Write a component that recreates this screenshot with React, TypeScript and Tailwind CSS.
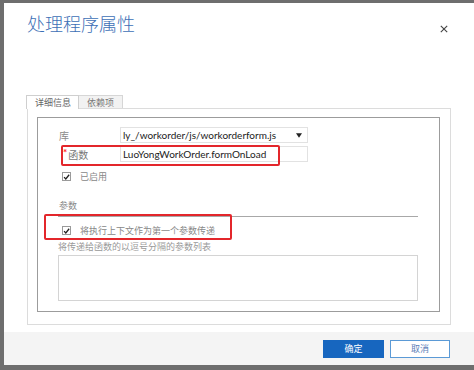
import React from 'react';

const cjk = '"Noto Sans CJK SC", "Open Sans", sans-serif';
const latin = 'Lato, "Noto Sans CJK SC", sans-serif';

const Check: React.FC = () => (
  <span className="w-[9px] h-[9px] border border-[#9a9a9a] bg-white flex items-center justify-center">
    <svg viewBox="0 0 10 10" className="w-[8px] h-[8px]">
      <path d="M1.5 5.2 L4 7.8 L8.8 1.8" fill="none" stroke="#222" strokeWidth="1.8" />
    </svg>
  </span>
);

export default function App() {
  return (
    <div
      className="w-[474px] h-[370px] bg-[#6e6e6e] pl-[4px] pt-[3px] pb-[5px] flex"
      style={{ fontFamily: cjk }}
    >
      <div className="flex-1 flex flex-col bg-white">
        {/* header */}
        <div className="h-[92px] flex justify-between items-start pl-[23px] pr-[26px] pt-[8px]">
          <h1 className="text-[18px] leading-[24px] font-light text-[#3d70b6]">处理程序属性</h1>
          <svg viewBox="0 0 10 10" className="w-[8px] h-[8px] mt-[14px]">
            <path d="M1 1 L9 9 M9 1 L1 9" stroke="#444" strokeWidth="1.4" />
          </svg>
        </div>

        {/* tabs */}
        <div className="flex ml-[22px] h-[14px] text-[9px] leading-[12px]">
          <div className="w-[53px] border border-b-0 border-[#cfcfcf] bg-white text-[#666] pl-[8px] pt-[1px] relative z-10 h-[14px]">
            详细信息
          </div>
          <div className="w-[44px] border border-l-0 border-[#d6d6d6] bg-[#f2f2f2] text-[#777] pl-[8px] pt-[1px]">
            依赖项
          </div>
        </div>

        {/* panel */}
        <div className="ml-[23px] mr-[23px] -mt-px h-[217px] border border-[#dcdcdc] pt-[8px] pl-[9px] pr-[10px] pb-[12px] flex">
          <div className="flex-1 border-[1.5px] border-[#9c9c9c] relative pt-[9px]">
            {/* 库 */}
            <div className="flex items-center h-[16px]">
              <span className="w-[82px] pl-[21px] text-[10px] text-[#8a8a8a]">库</span>
              <div className="w-[188px] h-[16px] border border-[#e2e2e2] flex items-center justify-between pl-[2px] pr-[5px] text-[10px] text-[#222]" style={{ fontFamily: latin }}>
                <span>ly_/workorder/js/workorderform.js</span>
                <svg viewBox="0 0 8 6" className="w-[6px] h-[5px]">
                  <path d="M0 0 H8 L4 6 Z" fill="#222" />
                </svg>
              </div>
            </div>
            {/* 函数 */}
            <div className="flex items-center h-[16px] mt-[3px]">
              <div className="w-[82px] pl-[25px] text-[10px] text-[#777] flex items-center gap-[1px]">
                <span className="text-[10px] leading-none text-[#ff2020] font-bold -mt-[5px]" style={{ fontFamily: latin }}>*</span>
                <span>函数</span>
              </div>
              <div className="w-[188px] h-[16px] border border-[#e2e2e2] flex items-center pl-[2px] text-[10px] text-[#222]" style={{ fontFamily: latin }}>
                LuoYongWorkOrder.formOnLoad
              </div>
            </div>
            {/* 已启用 */}
            <div className="flex items-center gap-[9px] ml-[24px] mt-[8px] text-[9px] text-[#888]">
              <Check />
              <span>已启用</span>
            </div>

            {/* 参数 */}
            <div className="ml-[21px] mt-[16px] text-[9px] text-[#888] leading-[12px]">参数</div>
            <div className="ml-[20px] mr-[21px] mt-[4px] h-px bg-[#a8a8a8]" />
            <div className="flex items-center gap-[9px] ml-[24px] mt-[9px] text-[9px] text-[#888] h-[10px]">
              <Check />
              <span>将执行上下文作为第一个参数传递</span>
            </div>
            <div className="ml-[20px] mt-[5px] text-[9px] text-[#999] leading-[12px]">将传递给函数的以逗号分隔的参数列表</div>
            <div className="ml-[20px] mr-[21px] mt-[2px] h-[46px] border border-[#d4d4d4]" />

            {/* red annotation boxes */}
            <div className="absolute left-[23px] top-[27px] w-[219px] h-[21px] border-2 border-[#e3262b] rounded-[2px]" />
            <div className="absolute left-[6px] top-[96px] w-[188px] h-[26px] border-2 border-[#e3262b] rounded-[2px]" />
          </div>
        </div>

        {/* footer */}
        <div className="mt-auto h-[33px] bg-[#f4f4f4] flex justify-end items-center gap-[6px] pr-[24px] text-[9px]">
          <button className="w-[61px] h-[18px] bg-[#1766bf] text-white">确定</button>
          <button className="w-[60px] h-[18px] bg-white border border-[#5b9ad6] text-[#5c80b8]">取消</button>
        </div>
      </div>
    </div>
  );
}
